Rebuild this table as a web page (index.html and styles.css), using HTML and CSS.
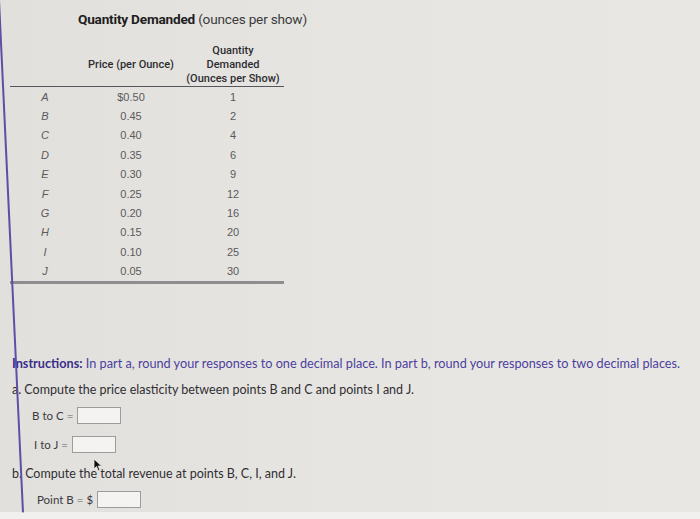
FILE: index.html
```html
<!DOCTYPE html>
<html>
<head>
<meta charset="utf-8">
<link rel="stylesheet" href="styles.css">
</head>
<body>
<div class="page">
  <div class="content">
    <h1 class="title"><b>Quantity Demanded</b> (ounces per show)</h1>
    <table class="demand">
      <thead>
        <tr>
          <th class="c1"></th>
          <th class="c2">Price (per Ounce)</th>
          <th class="c3">Quantity<br>Demanded<br>(Ounces per Show)</th>
        </tr>
      </thead>
      <tbody>
        <tr><td class="c1">A</td><td class="c2">$0.50</td><td class="c3">1</td></tr>
        <tr><td class="c1">B</td><td class="c2">0.45</td><td class="c3">2</td></tr>
        <tr><td class="c1">C</td><td class="c2">0.40</td><td class="c3">4</td></tr>
        <tr><td class="c1">D</td><td class="c2">0.35</td><td class="c3">6</td></tr>
        <tr><td class="c1">E</td><td class="c2">0.30</td><td class="c3">9</td></tr>
        <tr><td class="c1">F</td><td class="c2">0.25</td><td class="c3">12</td></tr>
        <tr><td class="c1">G</td><td class="c2">0.20</td><td class="c3">16</td></tr>
        <tr><td class="c1">H</td><td class="c2">0.15</td><td class="c3">20</td></tr>
        <tr><td class="c1">I</td><td class="c2">0.10</td><td class="c3">25</td></tr>
        <tr><td class="c1">J</td><td class="c2">0.05</td><td class="c3">30</td></tr>
      </tbody>
    </table>

    <div class="questions">
      <p class="instructions"><b>Instructions:</b> In part a, round your responses to one decimal place. In part b, round your responses to two decimal places.</p>
      <p class="part">a. Compute the price elasticity between points B and C and points I and J.</p>
      <div class="answer a1"><span>B to C</span><span class="eq">=</span><span class="box"></span></div>
      <div class="answer a2"><span>I to J</span><span class="eq">=</span><span class="box"></span></div>
      <p class="part partb">b. Compute the total revenue at points B, C, I, and J.</p>
      <div class="answer a3"><span>Point B</span><span class="eq">=</span><span>$</span><span class="box"></span></div>
    </div>
  </div>
  <div class="strip"></div>
  <div class="edge"></div>
  <svg class="cursor" width="10" height="14" viewBox="0 0 10 14"><path d="M1 1 L1 11 L3.5 8.6 L5.4 13 L7 12.3 L5.2 8 L8.6 8 Z" fill="#111" stroke="#eee" stroke-width="0.8"/></svg>
</div>
</body>
</html>
```

FILE: styles.css
```css
html, body {
  margin: 0;
  padding: 0;
}
body {
  width: 700px;
  height: 519px;
  overflow: hidden;
}
.page {
  position: relative;
  width: 700px;
  height: 519px;
  display: flex;
  flex-direction: column;
  background: linear-gradient(90deg, #e2e0dc 0%, #e7e5e1 50%, #e9e7e3 100%);
}
.content {
  flex: 1;
  display: flex;
  flex-direction: column;
}
.strip {
  height: 7px;
  background: #f1f0ee;
}
.title {
  margin: 9px 0 0 78px;
  font-family: Roboto, "Liberation Sans", sans-serif;
  font-size: 13.6px;
  letter-spacing: -0.2px;
  font-weight: 400;
  line-height: 20px;
  color: #3a3a3c;
}
.title b {
  font-weight: 700;
  color: #1d1d22;
}
.demand {
  margin: 15px 0 0 10px;
  width: 274px;
  border-collapse: collapse;
  table-layout: fixed;
}
.demand .c1 { width: 70px; }
.demand .c2 { width: 102px; }
.demand .c3 { width: 102px; }
.demand th {
  font-family: Roboto, "Liberation Sans", sans-serif;
  font-size: 11px;
  font-weight: 500;
  line-height: 14px;
  color: #2d2d30;
  text-align: center;
  vertical-align: middle;
  padding: 0;
  border-bottom: 1px solid #55555a;
}
.demand td {
  font-family: "Liberation Sans", Arial, sans-serif;
  font-size: 11px;
  color: #5a5a5c;
  text-align: center;
  height: 19.4px;
  padding: 0;
}
.demand td.c1 {
  font-style: italic;
}
.demand tbody tr:last-child td {
  border-bottom: 3px solid #8e8e8e;
}
.questions {
  margin-top: 70px;
  padding-left: 12px;
  font-family: Lato, "Open Sans", sans-serif;
}
.instructions {
  margin: 0;
  font-size: 12.7px;
  line-height: 18px;
  color: #4b3f9e;
}
.instructions b {
  font-weight: 700;
  color: #3a2f8a;
}
.part {
  margin: 9px 0 0 0;
  font-size: 12.5px;
  line-height: 18px;
  color: #2f2f33;
}
.partb {
  margin-top: 12px;
}
.answer {
  display: flex;
  align-items: center;
  gap: 3px;
  font-size: 11.5px;
  color: #3a3a3e;
  height: 16px;
}
.answer .eq {
  color: #9a9a9a;
}
.answer .box {
  width: 42px;
  height: 15px;
  border: 1px solid #9c9c9c;
  background: #f4f3f1;
  margin-left: 1px;
}
.a1 { margin: 9px 0 0 20px; }
.a2 { margin: 13px 0 0 22px; }
.a3 { margin: 9px 0 0 25px; }
.edge {
  position: absolute;
  left: -2px;
  top: 0;
  width: 2px;
  height: 513px;
  background: #5b50a6;
  transform-origin: top left;
  transform: rotate(-2.68deg);
}
.cursor {
  position: absolute;
  left: 93px;
  top: 458px;
}
```
